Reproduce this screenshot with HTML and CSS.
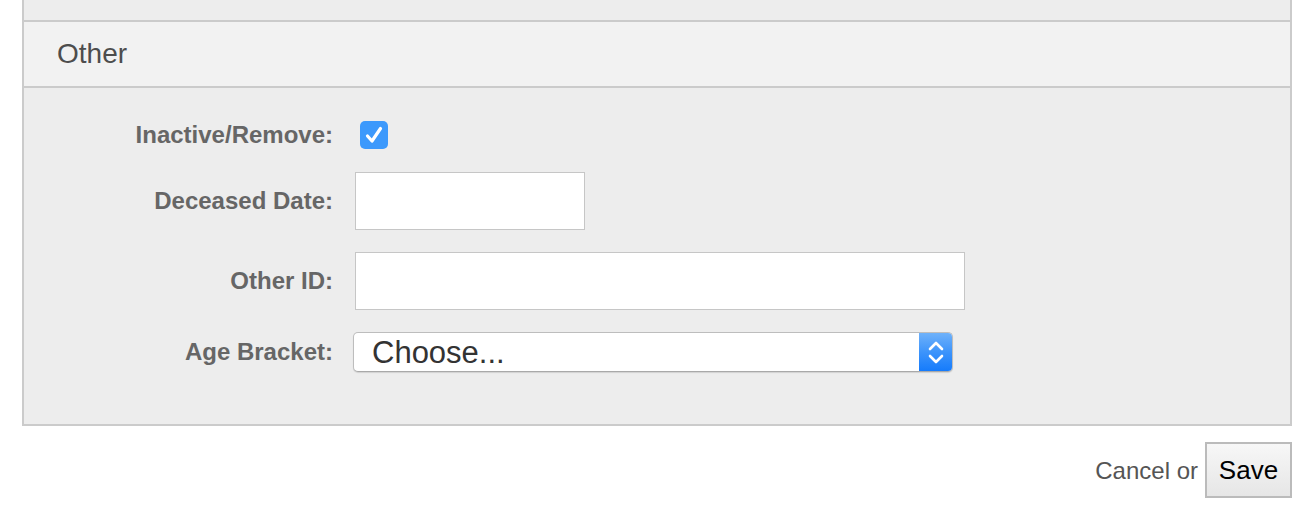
FILE: index.html
```html
<!DOCTYPE html>
<html>
<head>
<meta charset="utf-8">
<link rel="stylesheet" href="styles.css">
</head>
<body>
<div class="wrap">
  <div class="prev-body"></div>
  <section class="panel">
    <div class="panel-head">Other</div>
    <div class="panel-body">
      <div class="form">
        <label class="lbl">Inactive/Remove:</label>
        <div class="ctrl">
          <span class="checkbox">
            <svg width="28" height="28" viewBox="0 0 28 28"><rect x="0" y="0" width="28" height="28" rx="5" fill="#3c99fc"/><path d="M7.5 15 L12 20 L20.5 7.5" fill="none" stroke="#fff" stroke-width="3.2" stroke-linecap="round" stroke-linejoin="round"/></svg>
          </span>
        </div>
        <label class="lbl">Deceased Date:</label>
        <div class="ctrl"><input class="input date" type="text"></div>
        <label class="lbl">Other ID:</label>
        <div class="ctrl"><input class="input otherid" type="text"></div>
        <label class="lbl">Age Bracket:</label>
        <div class="ctrl sel-ctrl">
          <div class="select">
            <span class="select-value">Choose...</span>
            <span class="select-arrow">
              <svg width="34" height="40" viewBox="0 0 34 40"><path d="M11 17 L17 11 L23 17" fill="none" stroke="#fff" stroke-width="2.6" stroke-linecap="round" stroke-linejoin="round"/><path d="M11 24 L17 30 L23 24" fill="none" stroke="#fff" stroke-width="2.6" stroke-linecap="round" stroke-linejoin="round"/></svg>
            </span>
          </div>
        </div>
      </div>
    </div>
  </section>
  <div class="actions">
    <span class="cancel">Cancel or</span>
    <button class="save" type="button">Save</button>
  </div>
</div>
</body>
</html>
```
FILE: styles.css
```css
html, body {
  margin: 0;
  padding: 0;
  background: #fff;
  font-family: "Liberation Sans", Arial, Helvetica, sans-serif;
}
.wrap {
  margin: 0 22px;
}
.prev-body {
  height: 20px;
  background: #ededed;
  border-left: 2px solid #cbcbcb;
  border-right: 2px solid #cbcbcb;
}
.panel {
  border: 2px solid #cbcbcb;
}
.panel-head {
  height: 66px;
  box-sizing: border-box;
  background: #f2f2f2;
  border-bottom: 2px solid #cbcbcb;
  padding-left: 33px;
  display: flex;
  align-items: center;
  font-size: 28px;
  color: #4d4d4d;
}
.panel-body {
  background: #ededed;
  padding: 32px 0 52px 0;
}
.form {
  display: grid;
  grid-template-columns: 309px 1fr;
  column-gap: 22px;
  row-gap: 22px;
  align-items: center;
}
.lbl {
  text-align: right;
  font-weight: bold;
  font-size: 24px;
  color: #666;
}
.ctrl {
  display: flex;
  align-items: center;
}
.checkbox {
  display: block;
  width: 28px;
  height: 28px;
  margin-left: 5px;
  padding: 1px 0;
}
.checkbox svg {
  display: block;
}
.input {
  box-sizing: border-box;
  height: 58px;
  margin: 0;
  background: #fff;
  border: 1px solid #c6c6c6;
  border-radius: 0;
  outline: none;
}
.date {
  width: 230px;
}
.otherid {
  width: 610px;
}
.sel-ctrl {
  margin-left: -2px;
}
.select {
  display: flex;
  width: 600px;
  height: 40px;
  box-sizing: border-box;
  background: #fff;
  border: 1px solid #bdbdbd;
  border-bottom-color: #a9a9a9;
  border-radius: 5px;
  overflow: hidden;
  box-shadow: 0 1px 1px rgba(0,0,0,0.12);
}
.select-value {
  flex: 1;
  padding-left: 18px;
  font-size: 31px;
  line-height: 40px;
  color: #333;
}
.select-arrow {
  width: 34px;
  flex: none;
  background: linear-gradient(to bottom, #71b3fa 0%, #3d94fb 50%, #137afc 100%);
  margin: -1px -1px -1px 0;
}
.select-arrow svg {
  display: block;
}
.actions {
  display: flex;
  justify-content: flex-end;
  align-items: baseline;
  gap: 7px;
  margin-top: 16px;
}
.cancel {
  font-size: 24px;
  color: #555;
}
.save {
  box-sizing: border-box;
  width: 87px;
  height: 56px;
  margin: 0;
  padding: 0;
  font-family: "Liberation Sans", Arial, Helvetica, sans-serif;
  font-size: 26px;
  color: #000;
  background: linear-gradient(to bottom, #f7f7f7, #e6e6e6);
  border: 2px solid #bbb;
  border-radius: 0;
}
```
